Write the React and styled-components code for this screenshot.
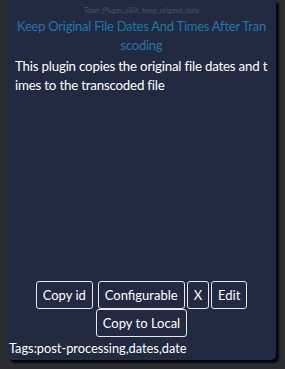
import React from "react"
import styled, { createGlobalStyle } from "styled-components"

const GlobalStyle = createGlobalStyle`
  body {
    margin: 0;
    background: #2c2d31;
    font-family: Lato, "Noto Sans", sans-serif;
  }
`

const Page = styled.div`
  width: 285px;
  height: 369px;
  padding-left: 7px;
  box-sizing: border-box;
`

const Card = styled.div`
  width: 269px;
  height: 360px;
  background: #222a41;
  border-radius: 0 0 5px 5px;
  box-shadow: 3px 3px 2px #050608;
  display: flex;
  flex-direction: column;
  box-sizing: border-box;
  padding: 0 2px 3px 2px;
`

const PluginId = styled.div`
  text-align: center;
  font-size: 7px;
  color: #4a5368;
  padding-top: 6px;
  line-height: 9px;
`

const Title = styled.div`
  text-align: center;
  color: #2376a8;
  font-size: 13px;
  letter-spacing: -0.25px;
  line-height: 19px;
  padding: 0 6px;
  word-break: break-all;
  margin-top: 2px;
`

const Description = styled.div`
  color: #ffffff;
  font-size: 13.3px;
  letter-spacing: -0.2px;
  line-height: 18.5px;
  padding: 0 6px;
  word-break: break-all;
  margin-top: 2px;
`

const Actions = styled.div`
  margin-top: auto;
  display: flex;
  flex-wrap: wrap;
  justify-content: center;
  column-gap: 2px;
  padding: 0 20px;
`

const Button = styled.button`
  height: 28px;
  background: transparent;
  color: #ffffff;
  border: 1px solid #e8e8ea;
  border-radius: 3px;
  font-family: Lato, sans-serif;
  font-size: 13px;
  padding: 0 6px;
  margin-left: ${(p) => (p.gap ? "3px" : "0")};
  cursor: pointer;
`

const Tags = styled.div`
  color: #ffffff;
  font-size: 12.8px;
  line-height: 18px;
  margin-top: 2px;
`

const App = () => {
  return (
    <>
      <GlobalStyle />
      <Page>
        <Card>
          <PluginId>Tdarr_Plugin_z80t_keep_original_date</PluginId>
          <Title>Keep Original File Dates And Times After Transcoding</Title>
          <Description>This plugin copies the original file dates and times to the transcoded file</Description>
          <Actions>
            <Button>Copy id</Button>
            <Button gap>Configurable</Button>
            <Button>X</Button>
            <Button>Edit</Button>
            <Button>Copy to Local</Button>
          </Actions>
          <Tags>Tags:post-processing,dates,date</Tags>
        </Card>
      </Page>
    </>
  )
}

export default App
